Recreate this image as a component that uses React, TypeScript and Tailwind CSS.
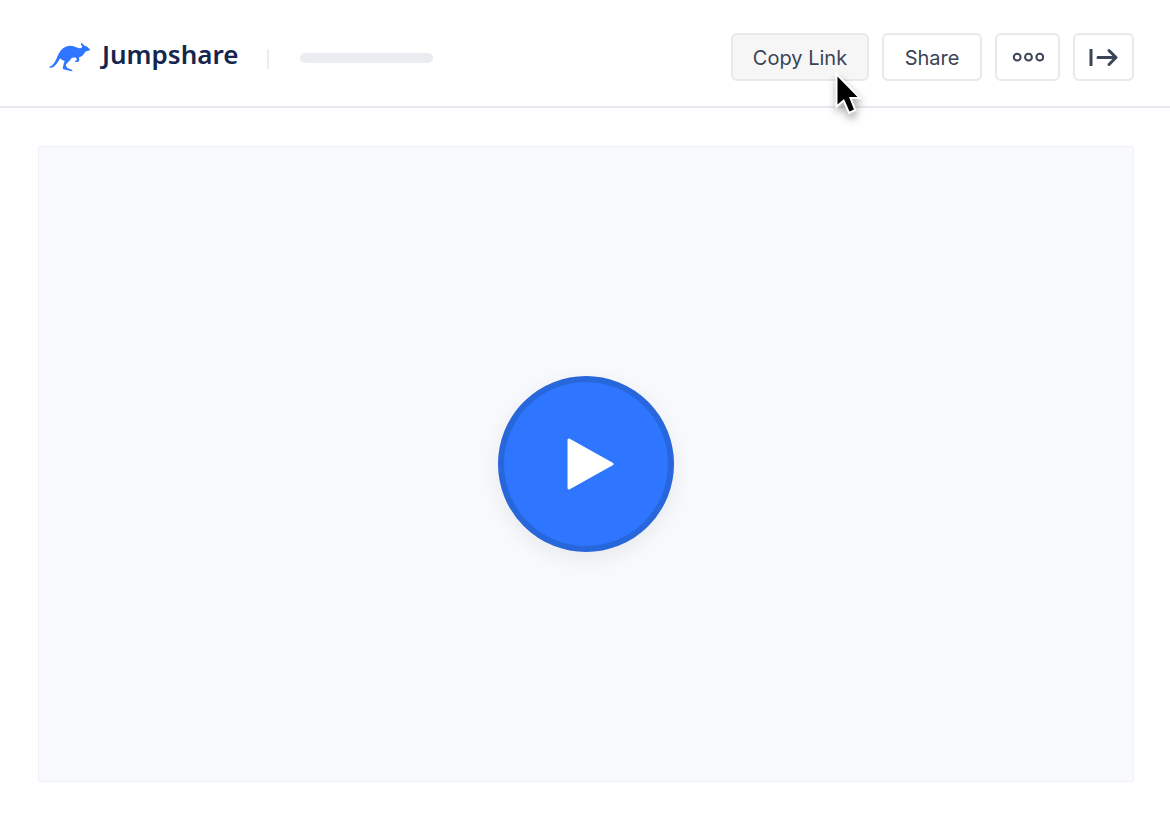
import type { ReactNode } from 'react';

type ToolbarButtonProps = {
  className: string;
  label?: string;
  children: ReactNode;
};

function ToolbarButton({ className, label, children }: ToolbarButtonProps) {
  return (
    <button
      type="button"
      aria-label={label}
      className={`flex h-12 items-center justify-center rounded-md border-2 border-[#e8e9ed] text-xl text-[#3b4357] ${className}`}
    >
      {children}
    </button>
  );
}

function KangarooIcon() {
  return (
    <svg width="44" height="30" viewBox="24 36 132 90" fill="#2e76ff" aria-hidden="true">
      <path d="M27 110C37 110 43 99 49 87C54 76 59 62 69 55C78 48 90 45 101 49C110 52 117 56 122 54C125 53 127 51 127 50C124 46 122 41 124 38C129 41 131 43 133 47C137 47 142 49 145 54L150 58C150 61 147 63 142 63C137 63 135 67 132 71C129 77 124 80 117 82L118 90C118 95 111 97 106 96L105 93L111 90L108 83C103 82 98 82 95 84C91 89 85 97 79 102L77 106L82 114L97 120L97 124L92 123L70 118L68 115L71 101L74 93C69 92 64 89 60 85C54 97 49 105 40 111C35 114 28 114 27 110Z" />
    </svg>
  );
}

function CursorIcon() {
  return (
    <svg
      width="36"
      height="52"
      viewBox="0 0 36 52"
      className="pointer-events-none absolute top-8 left-[98px] z-10 overflow-visible drop-shadow-[1px_5px_4px_rgba(0,0,0,0.35)]"
      aria-hidden="true"
    >
      <path
        d="M8.5 11.5V39.5L15 34L20.5 46.5L25 44.5L20 32H28.5Z"
        fill="#000"
        stroke="#fff"
        strokeWidth="4"
        paintOrder="stroke"
      />
    </svg>
  );
}

function Header() {
  return (
    <header className="flex h-[108px] items-center justify-between border-b-2 border-[#e9eaef] pt-2 pr-9 pl-12">
      <div className="flex items-center">
        <a href="/" className="flex items-center gap-2.5">
          <KangarooIcon />
          <span className="pb-1.5 font-['Noto_Sans',sans-serif] text-[26px] leading-9 font-semibold text-[#14264d]">
            Jumpshare
          </span>
        </a>
        <div className="mt-1 ml-[29px] h-5 w-0.5 bg-[#ebecf0]" />
        <div className="mt-0.5 ml-[31px] h-2.5 w-[133px] rounded-full bg-[#ebecf0]" />
      </div>

      <div className="flex items-center gap-[13px]">
        <div className="relative">
          <ToolbarButton className="w-[138px] bg-[#f6f6f7] pt-0.5">Copy Link</ToolbarButton>
          <CursorIcon />
        </div>
        <ToolbarButton className="w-[100px] bg-white pt-0.5">Share</ToolbarButton>
        <ToolbarButton className="w-[65px] bg-white" label="More options">
          <svg width="32" height="12" viewBox="0 0 32 12" fill="none" stroke="currentColor" strokeWidth="2">
            <circle cx="5.2" cy="6.2" r="3.4" />
            <circle cx="16.5" cy="6.2" r="3.4" />
            <circle cx="27.8" cy="6.2" r="3.4" />
          </svg>
        </ToolbarButton>
        <ToolbarButton className="w-[61px] bg-white" label="Open sidebar">
          <svg
            width="30"
            height="20"
            viewBox="0 0 30 20"
            fill="none"
            stroke="currentColor"
            strokeWidth="3"
            strokeLinejoin="round"
          >
            <path d="M2 2V19" />
            <path d="M9 10.5H27M20 3.5L27 10.5L20 17.5" strokeLinecap="round" />
          </svg>
        </ToolbarButton>
      </div>
    </header>
  );
}

function VideoPlayer() {
  return (
    <main className="flex flex-1 pt-[38px] pr-9 pb-9 pl-[38px]">
      <section className="flex flex-1 items-center justify-center rounded-xs border border-[#eff1f6] bg-[#f8f9fd]">
        <button
          type="button"
          aria-label="Play"
          className="flex size-44 items-center justify-center rounded-full border-6 border-[#2866dc] bg-[#2e76ff] shadow-[0_6px_20px_rgba(0,0,0,0.07)]"
        >
          <svg width="48" height="52" viewBox="0 0 48 52" className="ml-2.5" aria-hidden="true">
            <path
              d="M2 2V50L45 26Z"
              fill="#fff"
              stroke="#fff"
              strokeWidth="3"
              strokeLinejoin="round"
            />
          </svg>
        </button>
      </section>
    </main>
  );
}

export default function App() {
  return (
    <div className="flex min-h-screen flex-col bg-white font-['Inter',sans-serif]">
      <Header />
      <VideoPlayer />
    </div>
  );
}
